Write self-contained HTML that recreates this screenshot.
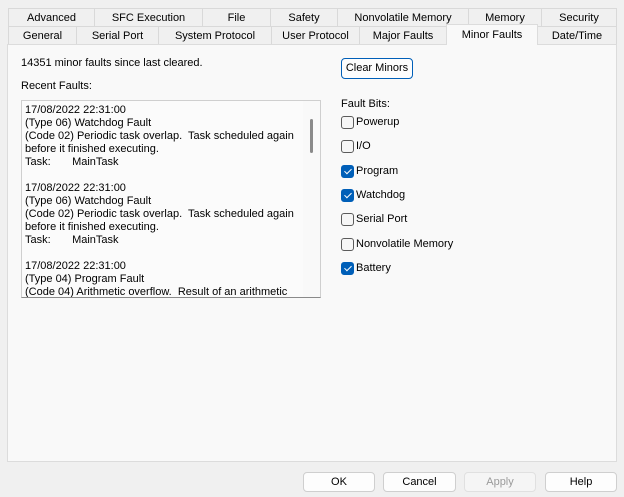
<!DOCTYPE html>
<html><head><style>
body{margin:0;width:624px;height:497px;background:#f0f0f0;font-family:"Liberation Sans",sans-serif;font-size:11px;color:#000;position:relative;overflow:hidden}
.a{position:absolute}
.tab{position:absolute;height:18px;line-height:18px;text-align:center;background:#f0f0f0;border:1px solid #d9d9d9;border-bottom:none;box-sizing:border-box;font-size:11px}
.panel{position:absolute;left:7px;top:44px;width:610px;height:418px;background:#f9f9f9;border:1px solid #dcdcdc;box-sizing:border-box}
.btn{position:absolute;height:20px;line-height:18px;text-align:center;background:#fdfdfd;border:1px solid #cfcfcf;border-radius:4px;box-sizing:border-box}
.cb{position:absolute;left:341px;width:13px;height:13px;border:1px solid #5b5b5b;border-radius:3px;box-sizing:border-box;background:#f6f6f6}
.cb.on{background:#005fb8;border-color:#005fb8}
.cb.on::after{content:"";position:absolute;left:3.5px;top:1px;width:3px;height:6px;border:solid #fff;border-width:0 1.2px 1.2px 0;transform:rotate(45deg)}
.lbl{position:absolute;left:356px}
.lst{position:absolute;left:21px;top:100px;width:300px;height:198px;background:#fbfbfb;border:1px solid #cfcfcf;border-bottom-color:#8a8a8a;box-sizing:border-box;overflow:hidden}
.lst pre{margin:0;position:absolute;left:3px;top:3px;font-family:"Liberation Sans",sans-serif;font-size:11px;line-height:13px;color:#000}
</style></head><body>
<div class="tab" style="left:8px;top:8px;width:87px">Advanced</div>
<div class="tab" style="left:94px;top:8px;width:109px">SFC Execution</div>
<div class="tab" style="left:202px;top:8px;width:69px">File</div>
<div class="tab" style="left:270px;top:8px;width:68px">Safety</div>
<div class="tab" style="left:337px;top:8px;width:132px">Nonvolatile Memory</div>
<div class="tab" style="left:468px;top:8px;width:74px">Memory</div>
<div class="tab" style="left:541px;top:8px;width:76px">Security</div>
<div class="tab" style="left:8px;top:26px;width:69px">General</div>
<div class="tab" style="left:76px;top:26px;width:83px">Serial Port</div>
<div class="tab" style="left:158px;top:26px;width:114px">System Protocol</div>
<div class="tab" style="left:271px;top:26px;width:89px">User Protocol</div>
<div class="tab" style="left:359px;top:26px;width:88px">Major Faults</div>
<div class="tab" style="left:537px;top:26px;width:80px">Date/Time</div>
<div class="panel"></div>
<div class="tab" style="left:446px;top:24px;width:92px;height:21px;line-height:20px;background:#f9f9f9;border-color:#dcdcdc;z-index:2">Minor Faults</div>
<div class="a" style="left:21px;top:57px">14351 minor faults since last cleared.</div>
<div class="a" style="left:21px;top:80px">Recent Faults:</div>
<div class="lst"><pre>17/08/2022 22:31:00
(Type 06) Watchdog Fault
(Code 02) Periodic task overlap.  Task scheduled again
before it finished executing.
Task:       MainTask

17/08/2022 22:31:00
(Type 06) Watchdog Fault
(Code 02) Periodic task overlap.  Task scheduled again
before it finished executing.
Task:       MainTask

17/08/2022 22:31:00
(Type 04) Program Fault
(Code 04) Arithmetic overflow.  Result of an arithmetic</pre>
<div class="a" style="left:281px;top:0;width:18px;height:196px;background:#f9f9f9"></div>
<div class="a" style="left:288px;top:18px;width:3px;height:34px;background:#8a8a8a;border-radius:2px"></div>
</div>
<div class="btn" style="left:341px;top:58px;width:72px;height:21px;border:1px solid #005fb8;line-height:19px">Clear Minors</div>
<div class="a" style="left:341px;top:98px">Fault Bits:</div>
<div class="cb" style="top:116px"></div><div class="lbl" style="top:116px">Powerup</div>
<div class="cb" style="top:140px"></div><div class="lbl" style="top:140px">I/O</div>
<div class="cb on" style="top:165px"></div><div class="lbl" style="top:165px">Program</div>
<div class="cb on" style="top:189px"></div><div class="lbl" style="top:189px">Watchdog</div>
<div class="cb" style="top:213px"></div><div class="lbl" style="top:213px">Serial Port</div>
<div class="cb" style="top:238px"></div><div class="lbl" style="top:238px">Nonvolatile Memory</div>
<div class="cb on" style="top:262px"></div><div class="lbl" style="top:262px">Battery</div>
<div class="btn" style="left:303px;top:472px;width:72px">OK</div>
<div class="btn" style="left:383px;top:472px;width:73px">Cancel</div>
<div class="btn" style="left:464px;top:472px;width:72px;color:#9a9a9a;background:#f5f5f5;border-color:#e0e0e0">Apply</div>
<div class="btn" style="left:545px;top:472px;width:72px">Help</div>
</body></html>
